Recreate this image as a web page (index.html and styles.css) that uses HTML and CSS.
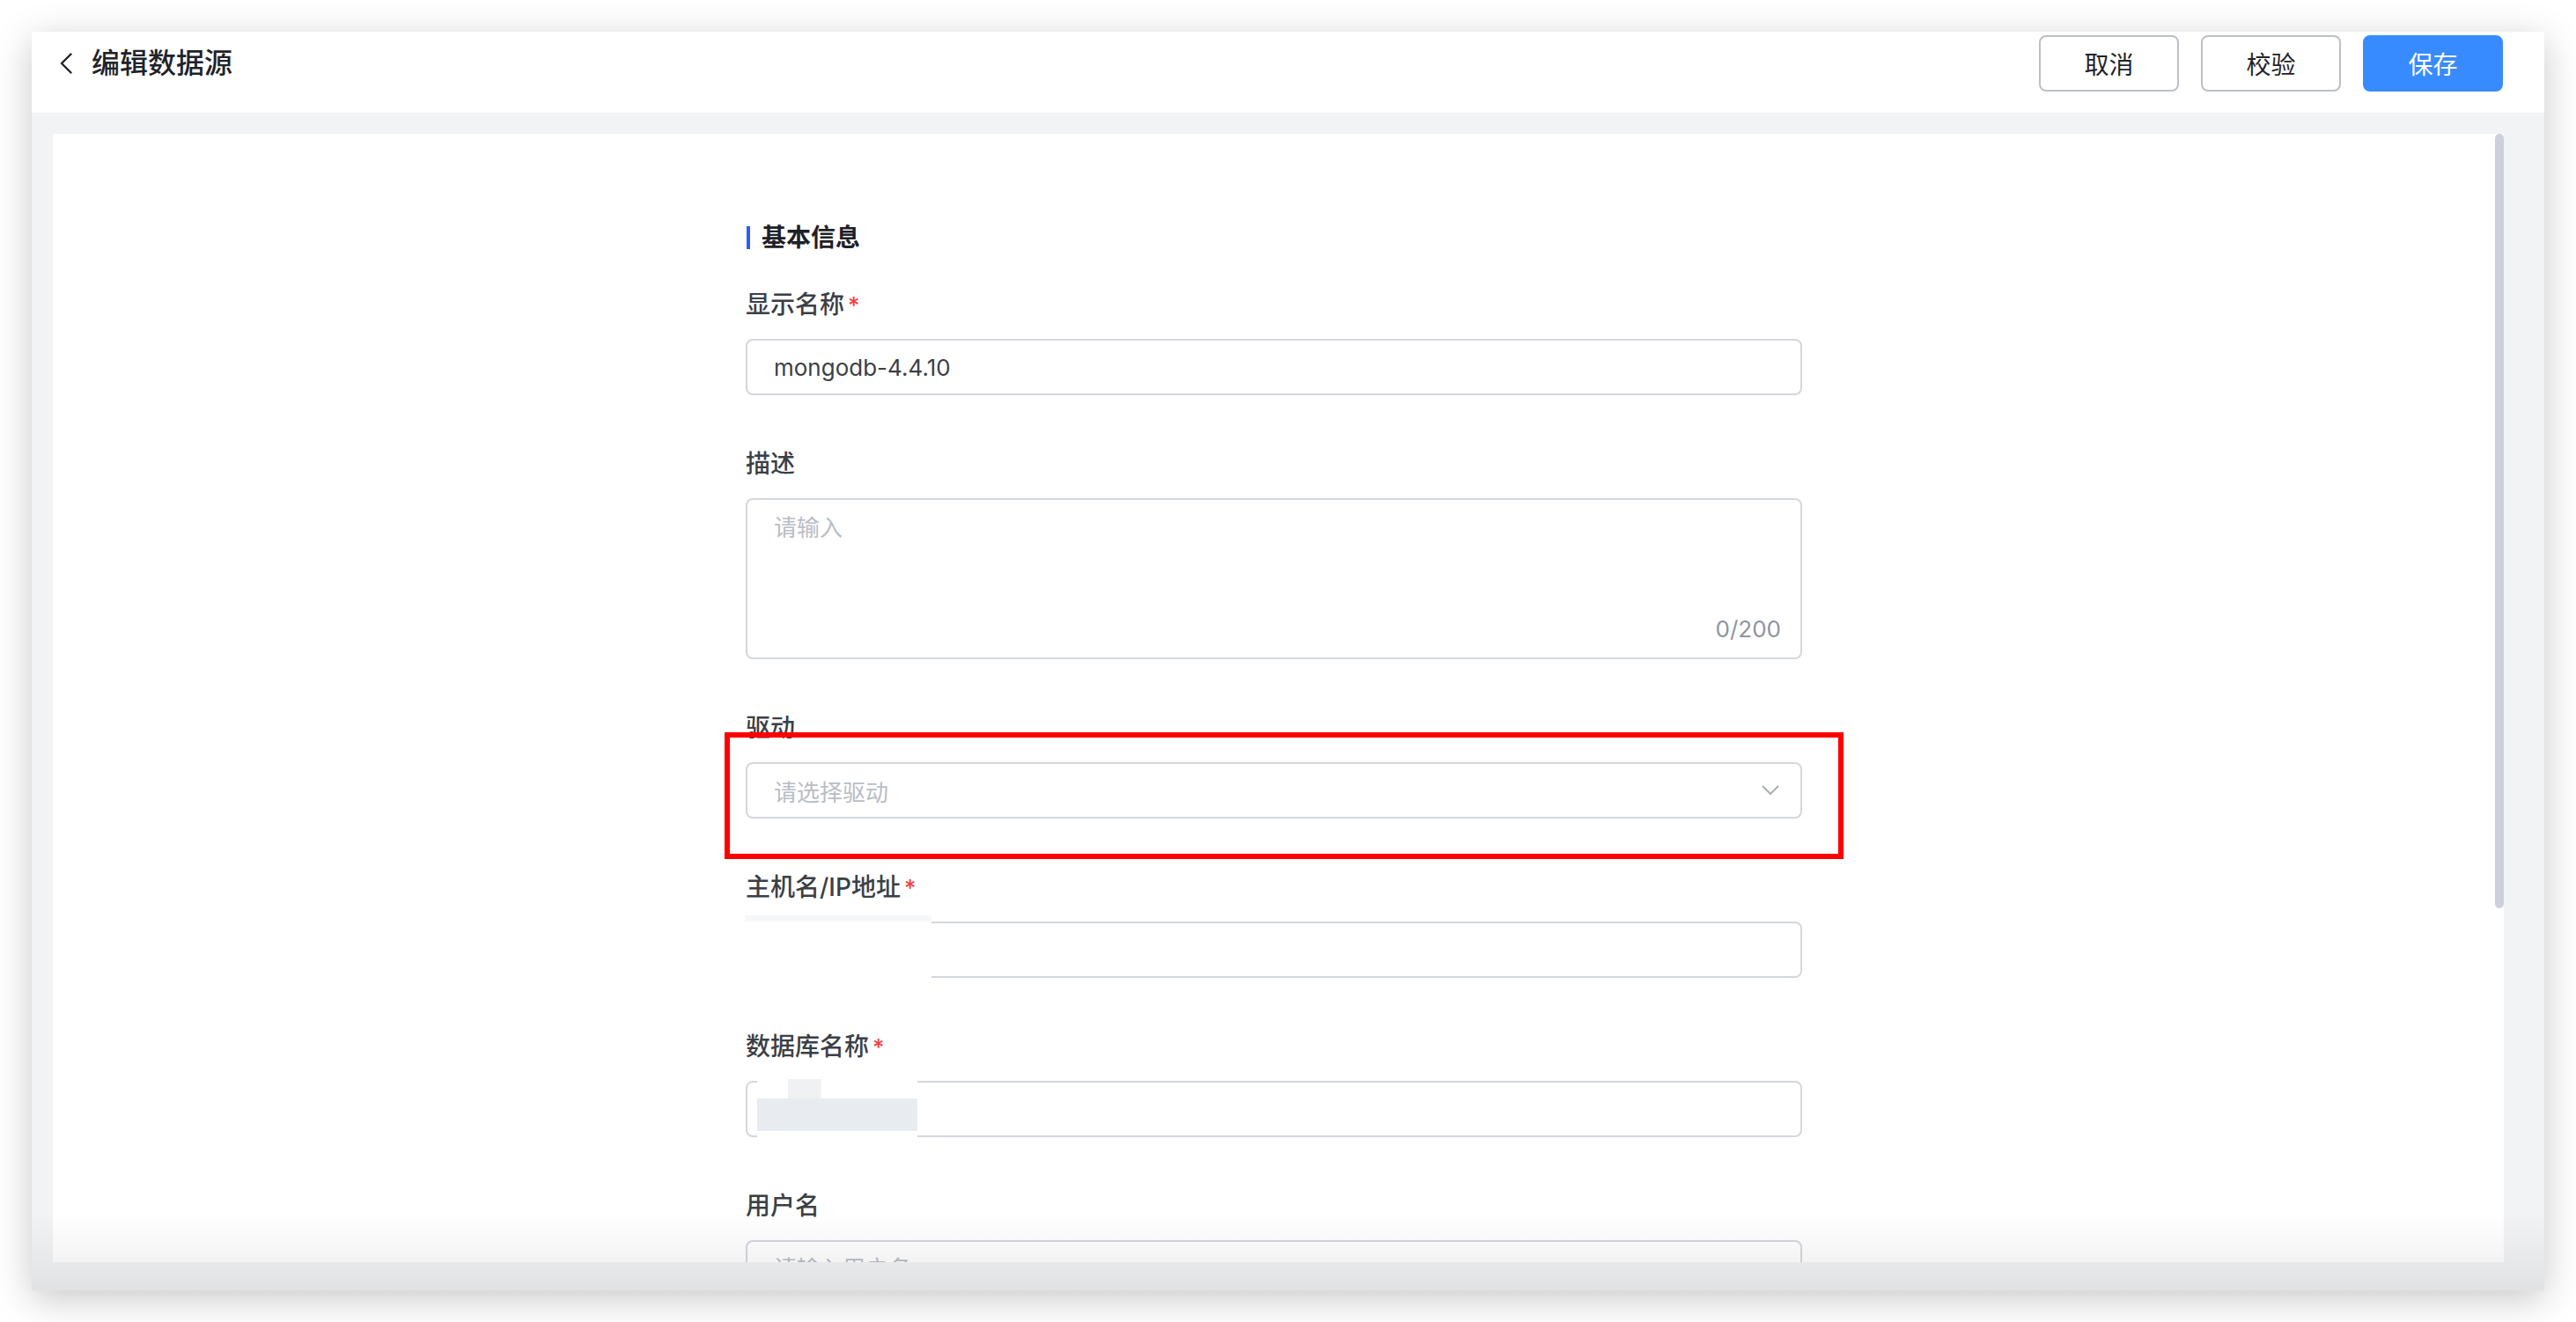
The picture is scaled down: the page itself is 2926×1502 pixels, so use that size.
FILE: index.html
```html
<!DOCTYPE html>
<html lang="zh-CN">
<head>
  <meta charset="UTF-8" />
  <meta name="viewport" content="width=device-width, initial-scale=1.0" />
  <title>编辑数据源</title>
  <link rel="stylesheet" href="styles.css">
</head>
<body>
  <div class="window">
    <header class="topbar">
      <div class="title">
        <svg class="back" width="14" height="24" viewBox="0 0 14 24">
          <polyline points="12.5,1.5 2,12 12.5,22.5" fill="none" stroke="#1f2329" stroke-width="2.4" stroke-linecap="round" stroke-linejoin="round"/>
        </svg>
        <h1>编辑数据源</h1>
      </div>
      <div class="actions">
        <button class="btn">取消</button>
        <button class="btn">校验</button>
        <button class="btn btn-primary">保存</button>
      </div>
    </header>

    <main class="body">
      <div class="content">
        <form class="form">
          <div class="section-title">基本信息</div>

          <div class="field">
            <label>显示名称<span class="req">*</span></label>
            <div class="control">
              <input class="input" type="text" value="mongodb-4.4.10" />
            </div>
          </div>

          <div class="field">
            <label>描述</label>
            <div class="control">
              <textarea class="input textarea" placeholder="请输入"></textarea>
              <span class="counter">0/200</span>
            </div>
          </div>

          <div class="field">
            <label>驱动</label>
            <div class="control">
              <div class="input select">
                <span class="placeholder">请选择驱动</span>
                <svg width="20" height="12" viewBox="0 0 20 12">
                  <polyline points="1,1 10,10 19,1" fill="none" stroke="#a9aeb8" stroke-width="2"/>
                </svg>
              </div>
            </div>
            <div class="mark"></div>
          </div>

          <div class="field">
            <label>主机名/IP地址<span class="req">*</span></label>
            <div class="control">
              <input class="input" type="text" />
              <div class="mask mask-host"></div>
            </div>
          </div>

          <div class="field">
            <label>数据库名称<span class="req">*</span></label>
            <div class="control">
              <input class="input" type="text" />
              <div class="mask mask-db">
                <div class="blob-top"></div>
                <div class="blob-bottom"></div>
              </div>
            </div>
          </div>

          <div class="field">
            <label>用户名</label>
            <div class="control">
              <input class="input" type="text" placeholder="请输入用户名" />
            </div>
          </div>
        </form>
      </div>
      <div class="thumb"></div>
    </main>
    <div class="fade"></div>
  </div>
</body>
</html>
```

FILE: styles.css
```css
* {
  box-sizing: border-box;
}
body {
  margin: 0;
  background: #fff;
  font-family: Inter, "Noto Sans CJK SC", sans-serif;
  color: #1f2329;
}
.window {
  position: relative;
  margin: 36px;
  width: 2854px;
  height: 1430px;
  background: #f2f3f5;
  display: flex;
  flex-direction: column;
  box-shadow: 0 10px 40px rgba(0, 0, 0, 0.22);
}
.topbar {
  height: 92px;
  flex: none;
  background: #fff;
  display: flex;
  justify-content: space-between;
  align-items: flex-start;
  padding: 4px 47px 0 32px;
}
.title {
  display: flex;
  align-items: center;
  height: 64px;
}
.back {
  margin-right: 22px;
}
.title h1 {
  margin: 0;
  font-size: 32px;
  font-weight: 500;
  line-height: 64px;
  color: #1f2329;
}
.actions {
  display: flex;
  gap: 25px;
}
.btn {
  width: 159px;
  height: 64px;
  border: 2px solid #bcc0c6;
  border-radius: 8px;
  background: #fff;
  font-family: inherit;
  font-size: 28px;
  color: #1f2329;
  padding: 0;
}
.btn-primary {
  background: #388bff;
  border-color: #388bff;
  color: #fff;
}
.body {
  position: relative;
  flex: 1;
  margin: 24px 46px 32px 24px;
  background: #fff;
  overflow: hidden;
}
.content {
  padding: 98px 10px 0 0;
}
.thumb {
  position: absolute;
  top: 0;
  right: 0;
  width: 10px;
  height: 880px;
  border-radius: 5px;
  background: #cdd0dc;
}
.form {
  width: 1200px;
  margin: 0 auto;
}
.section-title {
  height: 40px;
  line-height: 40px;
  margin-bottom: 36px;
  padding-left: 18px;
  border-left: 4px solid #2f5bff;
  font-size: 28px;
  font-weight: 700;
  color: #1d2129;
  display: flex;
  align-items: center;
}
.section-title {
  border-left: none;
  position: relative;
}
.section-title::before {
  content: "";
  position: absolute;
  left: 1px;
  top: 7px;
  width: 4px;
  height: 26px;
  background: #2f5bff;
}
.field {
  position: relative;
  margin-bottom: 58px;
}
.field label {
  display: block;
  height: 40px;
  line-height: 40px;
  margin-bottom: 19px;
  font-size: 28px;
  font-weight: 500;
  color: #3b3f46;
}
.req {
  color: #f53f3f;
  margin-left: 4px;
  font-size: 26px;
}
.control {
  position: relative;
}
.input {
  display: block;
  width: 100%;
  height: 64px;
  border: 2px solid #d4d7de;
  border-radius: 8px;
  background: #fff;
  padding: 0 24px 0 30px;
  font-family: inherit;
  font-size: 26px;
  color: #3b3f46;
  outline: none;
}
.input::placeholder {
  color: #b9bdc5;
}
.textarea {
  height: 183px;
  padding-top: 14px;
  line-height: 36px;
  resize: none;
}
.counter {
  position: absolute;
  right: 24px;
  bottom: 20px;
  line-height: 28px;
  font-size: 26px;
  color: #8f959e;
}
.select {
  display: flex;
  align-items: center;
  justify-content: space-between;
}
.placeholder {
  color: #b9bdc5;
}
.mark {
  position: absolute;
  left: -24px;
  top: 25px;
  width: 1271px;
  height: 144px;
  border: 6px solid #ff0000;
}
.mask {
  position: absolute;
  background: #fff;
}
.mask-host {
  left: -1px;
  top: -7px;
  width: 212px;
  height: 72px;
  background: linear-gradient(#f6f7f8 0, #f6f7f8 7px, #fff 8px);
}
.mask-db {
  left: 13px;
  top: -2px;
  width: 182px;
  height: 67px;
}
.blob-top {
  margin-left: 35px;
  width: 38px;
  height: 22px;
  background: #f0f1f3;
}
.blob-bottom {
  height: 37px;
  background: #e8ebef;
}
.fade {
  position: absolute;
  left: 0;
  right: 0;
  bottom: 0;
  height: 90px;
  background: linear-gradient(rgba(0, 0, 0, 0), rgba(0, 0, 0, 0.07));
  pointer-events: none;
}
```
